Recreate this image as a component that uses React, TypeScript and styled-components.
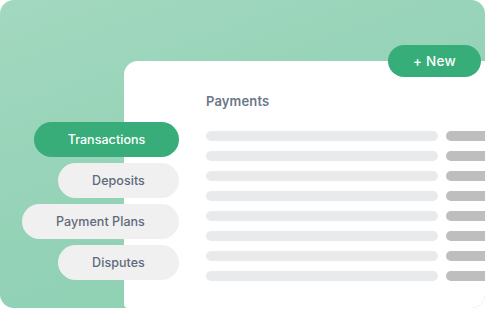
import React from "react";
import styled, { createGlobalStyle } from "styled-components";

const Global = createGlobalStyle`
  html, body { margin: 0; padding: 0; background: #ffffff; }
  body { font-family: Inter, "Open Sans", "Liberation Sans", sans-serif; -webkit-font-smoothing: antialiased; }
  * { box-sizing: border-box; }
`;

const Stage = styled.div`
  position: relative;
  width: 485px;
  height: 308px;
  border-radius: 14px;
  overflow: hidden;
  background: linear-gradient(160deg, #a2d8bf 0%, #93d2b6 55%, #8ccfb1 100%);
  padding: 61px 0 0 124px;
  display: flex;
`;

const Card = styled.div`
  position: relative;
  flex: 1;
  min-width: 0;
  background: #ffffff;
  border-radius: 14px 0 0 4px;
  padding: 32px 0 0 82px;
  display: flex;
  flex-direction: column;
`;

const NewButton = styled.div`
  position: absolute;
  top: -16px;
  right: 4px;
  width: 93px;
  height: 32px;
  border-radius: 16px;
  background: #37ad7a;
  color: #ffffff;
  font-size: 13.5px;
  font-weight: 500;
  display: flex;
  align-items: center;
  justify-content: center;
  letter-spacing: 0.3px;
`;

const Title = styled.div`
  font-size: 13px;
  font-weight: 600;
  color: #6b7688;
  line-height: 16px;
  letter-spacing: 0.15px;
`;

const Rows = styled.div`
  margin-top: 22px;
  display: flex;
  flex-direction: column;
  gap: 10px;
`;

const Row = styled.div`
  display: flex;
  gap: 8px;
`;

const Bar = styled.div<{ $dark?: boolean }>`
  height: 10px;
  border-radius: 5px;
  background: ${(p) => (p.$dark ? "#bebebe" : "#e9eaeb")};
  width: ${(p) => (p.$dark ? "60px" : "232px")};
  flex-shrink: 0;
`;

const Nav = styled.div`
  position: absolute;
  left: 0;
  top: 122px;
  width: 179px;
  display: flex;
  flex-direction: column;
  align-items: flex-end;
  gap: 6px;
`;

const Pill = styled.div<{ $active?: boolean; $w: number }>`
  width: ${(p) => p.$w}px;
  height: 35px;
  border-radius: 17.5px;
  background: ${(p) => (p.$active ? "#38ad7a" : "#f0f0f0")};
  color: ${(p) => (p.$active ? "#ffffff" : "#5e6a7c")};
  font-size: 12.5px;
  font-weight: 500;
  letter-spacing: 0.05px;
  display: flex;
  align-items: center;
  justify-content: center;
`;

const items = [
  { label: "Transactions", w: 145, active: true },
  { label: "Deposits", w: 121 },
  { label: "Payment Plans", w: 157 },
  { label: "Disputes", w: 121 },
];

export default function App() {
  return (
    <>
      <Global />
      <Stage>
        <Card>
          <NewButton>+ New</NewButton>
          <Title>Payments</Title>
          <Rows>
            {Array.from({ length: 8 }).map((_, i) => (
              <Row key={i}>
                <Bar />
                <Bar $dark />
              </Row>
            ))}
          </Rows>
        </Card>
        <Nav>
          {items.map((it) => (
            <Pill key={it.label} $active={it.active} $w={it.w}>
              {it.label}
            </Pill>
          ))}
        </Nav>
      </Stage>
    </>
  );
}
